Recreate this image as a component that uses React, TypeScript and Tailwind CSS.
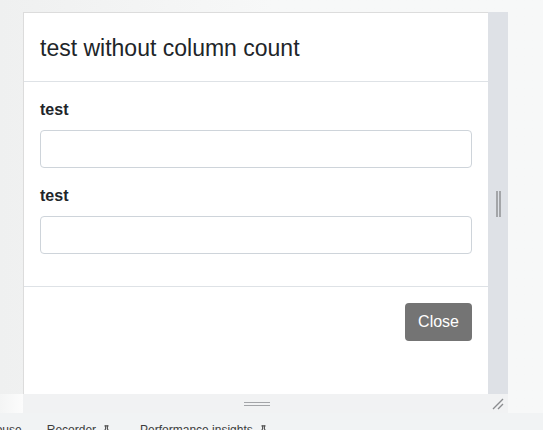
import { FlaskConical } from 'lucide-react';

const Field = ({ label }: { label: string }) => (
  <div className="mb-4">
    <label className="block text-[16px] leading-6 font-bold text-[#212529] mb-2">{label}</label>
    <input
      type="text"
      className="block w-full h-[38px] rounded-[4px] border border-[#ced4da] bg-white px-3 outline-none"
    />
  </div>
);

export default function App() {
  return (
    <div
      className="w-[543px] h-[430px] overflow-hidden flex flex-col bg-[#f7f8f8] text-[#212529]"
      style={{ fontFamily: '"Liberation Sans", Arial, sans-serif' }}
    >
      <div className="h-[413px] flex flex-col pt-[12px] bg-gradient-to-r from-[#eff0f0] via-[#f7f8f8] to-[#f7f8f8]">
        <div className="flex h-[382px] pl-[23px]">
          {/* modal */}
          <div className="w-[465px] bg-white border-t border-l border-[#dcdcdc] flex flex-col">
            <div className="h-[69px] px-4 flex items-center border-b border-[#dee2e6]">
              <h5 className="text-[23px] leading-[30px] text-[#212529] pt-[1px]">test without column count</h5>
            </div>
            <div className="px-4 pt-4 pb-4 border-b border-[#dee2e6]">
              <Field label="test" />
              <Field label="test" />
            </div>
            <div className="flex justify-end px-4 pt-4">
              <button className="h-[38px] px-[13px] rounded-[4px] bg-[#747474] text-white text-[16px]">Close</button>
            </div>
          </div>
          {/* side resize strip */}
          <div className="w-[20px] bg-[#dee1e6] flex justify-center pt-[179px]">
            <div className="flex gap-[1px] h-[26px]">
              <div className="w-[2px] bg-[#a3a5a8]" />
              <div className="w-[2px] bg-[#a3a5a8]" />
            </div>
          </div>
        </div>
        <div className="flex">
          <div className="w-[23px] h-[19px] bg-gradient-to-r from-[#f4f5f5] to-[#fcfcfc]" />
          <div className="relative w-[485px] h-[19px] bg-[#f1f2f3] flex items-center pl-[221px]">
            <div className="flex flex-col gap-[2px] mt-[1px]">
              <div className="w-[26px] h-[1px] bg-[#a3a5a8]" />
              <div className="w-[26px] h-[1px] bg-[#a3a5a8]" />
            </div>
            <svg className="absolute right-[3px] bottom-[3px]" width="14" height="14" viewBox="0 0 14 14">
              <path d="M2 13 L12 3 M7 13 L12 8" stroke="#8a8c8f" strokeWidth="1.4" fill="none" />
            </svg>
          </div>
        </div>
      </div>
      <div className="h-[1px] bg-[#cbcdd1]" />
      <div className="flex-1 bg-[#f1f3f4] flex items-start text-[12px] text-[#3c3c3c] pt-[9px] leading-[16px] whitespace-nowrap">
        <span className="ml-[-37px]">Lighthouse</span>
        <span className="ml-[25px] flex items-center gap-[5px]">
          Recorder <FlaskConical size={11} strokeWidth={2.5} className="text-[#555]" />
        </span>
        <span className="ml-[28px] flex items-center gap-[5px]">
          Performance insights <FlaskConical size={11} strokeWidth={2.5} className="text-[#555]" />
        </span>
      </div>
    </div>
  );
}
